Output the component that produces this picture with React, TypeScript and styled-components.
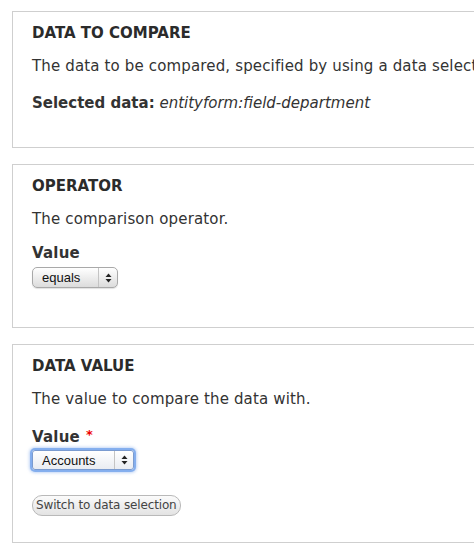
import React from 'react';
import styled, { createGlobalStyle } from 'styled-components';

const GlobalStyle = createGlobalStyle`
  html, body {
    margin: 0;
    padding: 0;
    background: #fff;
    overflow: hidden;
  }
  body {
    font-family: "DejaVu Sans", "Noto Sans", sans-serif;
    color: #333;
  }
`;

const Page = styled.div`
  width: 640px;
  padding: 11px 0 0 12px;
  display: flex;
  flex-direction: column;
  gap: 16px;
`;

const Fieldset = styled.fieldset<{ $bottom: number }>`
  margin: 0;
  border: 1px solid #cfcfcf;
  padding: 11px 19px ${(p) => p.$bottom}px;
  min-width: 0;
`;

const Legend = styled.div`
  font-size: 15px;
  font-weight: bold;
  line-height: 20px;
  text-transform: uppercase;
  color: #2b2b2b;
  margin-bottom: 13px;
`;

const Description = styled.p<{ $after: number; $tight?: boolean }>`
  margin: 0 0 ${(p) => p.$after}px;
  font-size: 15px;
  line-height: 20px;
  letter-spacing: ${(p) => (p.$tight ? 0 : 0.15)}px;
  white-space: nowrap;
`;

const Label = styled.div`
  font-size: 15px;
  font-weight: bold;
  line-height: 20px;
  letter-spacing: 0.2px;
  margin-bottom: 4px;
`;

const Required = styled.span`
  color: #e00;
  font-size: 13px;
  margin-left: 6px;
  vertical-align: 3px;
`;

const Em = styled.em`
  font-style: italic;
  font-weight: normal;
`;

const SelectBox = styled.div<{ $width: number; $focused?: boolean }>`
  display: flex;
  align-items: center;
  width: ${(p) => p.$width}px;
  height: ${(p) => (p.$focused ? 20 : 21)}px;
  margin-top: ${(p) => (p.$focused ? -1 : 0)}px;
  box-sizing: border-box;
  border: 1px solid ${(p) => (p.$focused ? '#7a9bd0' : '#a9a9a9')};
  border-radius: ${(p) => (p.$focused ? '3px' : '5px')};
  background: ${(p) =>
    p.$focused
      ? 'linear-gradient(#ffffff, #e9ecf2)'
      : 'linear-gradient(#ffffff, #dcdcdc)'};
  box-shadow: ${(p) =>
    p.$focused
      ? '0 0 0 2px rgba(110, 160, 235, 0.75), 0 0 3px 3px rgba(120, 165, 235, 0.45)'
      : '0 1px 1px rgba(0, 0, 0, 0.12)'};
  font-family: "Liberation Sans", Arial, sans-serif;
  font-size: 13px;
  color: #111;
`;

const SelectText = styled.span`
  flex: 1;
  padding-left: 9px;
`;

const SelectArrows = styled.span`
  width: 18px;
  height: 100%;
  border-left: 1px solid #c4c4c4;
  display: flex;
  align-items: center;
  justify-content: center;
`;

const Button = styled.button`
  display: block;
  margin-top: 25px;
  height: 21px;
  padding: 0 3px;
  border: 1px solid #b9b9b9;
  border-radius: 10px;
  background: linear-gradient(#fbfbfb, #e3e3e3);
  font-family: "DejaVu Sans", "Noto Sans", sans-serif;
  font-size: 12px;
  letter-spacing: -0.15px;
  color: #444;
  line-height: 19px;
`;

const Arrows = () => (
  <svg width="7" height="10" viewBox="0 0 7 10">
    <path d="M3.5 0.5 L6.5 4 H0.5 Z" fill="#222" />
    <path d="M3.5 9.5 L6.5 6 H0.5 Z" fill="#222" />
  </svg>
);

type SelectProps = {
  value: string;
  width: number;
  focused?: boolean;
};

const Select = ({ value, width, focused }: SelectProps) => (
  <SelectBox $width={width} $focused={focused}>
    <SelectText>{value}</SelectText>
    <SelectArrows>
      <Arrows />
    </SelectArrows>
  </SelectBox>
);

const App = () => {
  return (
    <>
      <GlobalStyle />
      <Page>
        <Fieldset $bottom={34}>
          <Legend>Data to compare</Legend>
          <Description $after={17}>
            The data to be compared, specified by using a data selector, e.g. "node:author:name".
          </Description>
          <Description $after={0} $tight>
            <b>Selected data:</b> <Em>entityform:field-department</Em>
          </Description>
        </Fieldset>

        <Fieldset $bottom={39}>
          <Legend>Operator</Legend>
          <Description $after={14}>The comparison operator.</Description>
          <Label>Value</Label>
          <Select value="equals" width={86} />
        </Fieldset>

        <Fieldset $bottom={26}>
          <Legend>Data value</Legend>
          <Description $after={16}>The value to compare the data with.</Description>
          <Label>
            Value<Required>*</Required>
          </Label>
          <Select value="Accounts" width={102} focused />
          <Button>Switch to data selection</Button>
        </Fieldset>
      </Page>
    </>
  );
};

export default App;
